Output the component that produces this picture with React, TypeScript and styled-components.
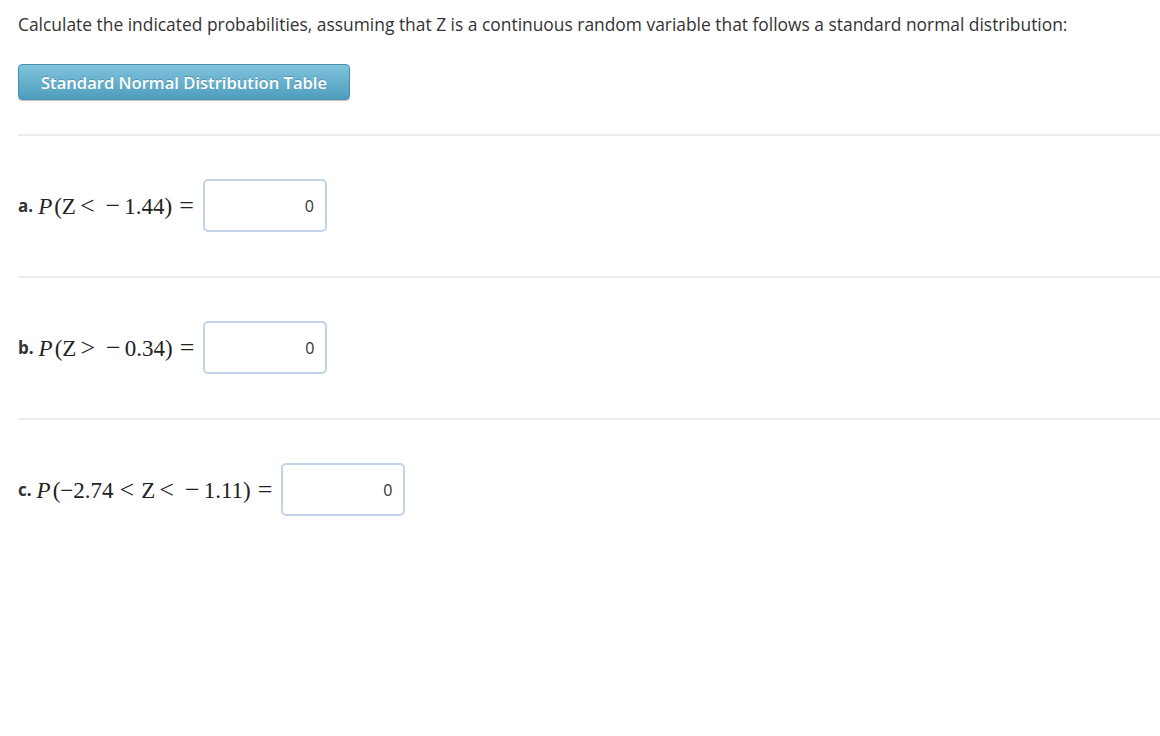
import React from "react";
import styled, { createGlobalStyle } from "styled-components";

const Global = createGlobalStyle`
  html, body { margin: 0; padding: 0; background: #fff; }
  body { font-family: "Open Sans", "Liberation Sans", sans-serif; color: #333; }
`;

const Page = styled.div`
  padding: 13px 0 0 18px;
`;

const Intro = styled.p`
  margin: 0;
  font-size: 17.4px;
  line-height: 22px;
  color: #333;
`;

const TableButton = styled.button`
  margin-top: 29px;
  width: 332px;
  height: 36px;
  border: 1px solid #4a8fae;
  border-radius: 4px;
  background: linear-gradient(#80c3dd, #4e9dbd);
  color: #fff;
  font-family: "Open Sans", "Liberation Sans", sans-serif;
  font-size: 16.6px;
  font-weight: 600;
  text-shadow: 0 -1px 0 rgba(0, 0, 0, 0.2);
  box-shadow: 0 1px 1px rgba(0, 0, 0, 0.25);
  padding: 0;
  cursor: pointer;
`;

const List = styled.div`
  margin-top: 34px;
`;

const Section = styled.div`
  border-top: 2px solid #ececec;
  padding: 43px 0 44px;
  display: flex;
  align-items: center;
`;

const Label = styled.span`
  font-weight: 700;
  font-size: 17px;
  margin-right: 5px;
`;

const Math = styled.span`
  display: inline-flex;
  align-items: baseline;
  font-family: "Liberation Serif", "Times New Roman", serif;
  font-size: 23px;
  color: #222;
  white-space: pre;
`;

const Ital = styled.i`
  margin-right: 2px;
`;

const Rel = styled.span<{ $l: number; $r: number }>`
  font-size: 26px;
  margin: 0 ${(p) => p.$r}px 0 ${(p) => p.$l}px;
`;

const Answer = styled.input`
  box-sizing: border-box;
  width: 124px;
  height: 53px;
  margin-left: 8px;
  border: 2px solid #c4d3ea;
  border-radius: 5px;
  text-align: right;
  padding: 0 11px;
  font-family: "Open Sans", "Liberation Sans", sans-serif;
  font-size: 16px;
  color: #333;
  outline: none;
`;

const Lt = ({ c = "<", l = 4 }: { c?: string; l?: number }) => (
  <Rel $l={l} $r={7}>
    {c}
  </Rel>
);
const Minus = () => (
  <Rel $l={4} $r={4}>
    −
  </Rel>
);
const Eq = () => (
  <Rel $l={7} $r={1}>
    =
  </Rel>
);

const rows = [
  {
    l: "a.",
    m: (
      <>
        (Z<Lt />
        <Minus />
        1.44)
        <Eq />
      </>
    ),
  },
  {
    l: "b.",
    m: (
      <>
        (Z<Lt c=">" />
        <Minus />
        0.34)
        <Eq />
      </>
    ),
  },
  {
    l: "c.",
    m: (
      <>
        (−2.74<Lt l={6} />Z<Lt />
        <Minus />
        1.11)
        <Eq />
      </>
    ),
  },
];

export default function App() {
  return (
    <Page>
      <Global />
      <Intro>
        Calculate the indicated probabilities, assuming that Z is a continuous random variable that follows a standard normal distribution:
      </Intro>
      <TableButton>Standard Normal Distribution Table</TableButton>
      <List>
        {rows.map((r) => (
          <Section key={r.l}>
            <Label>{r.l}</Label>
            <Math>
              <Ital>P</Ital>
              {r.m}
            </Math>
            <Answer defaultValue="0" />
          </Section>
        ))}
      </List>
    </Page>
  );
}
